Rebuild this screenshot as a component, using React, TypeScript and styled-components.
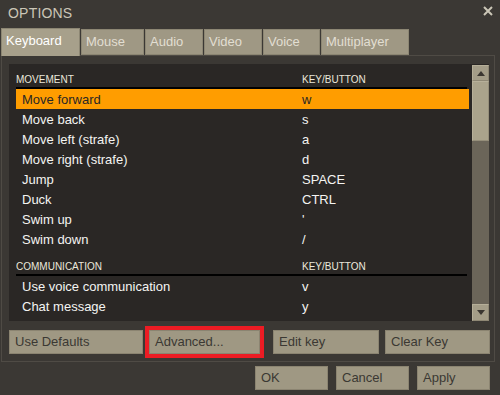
import React from "react";
import styled, { createGlobalStyle } from "styled-components";

const Global = createGlobalStyle`
  html, body {
    margin: 0;
    padding: 0;
    width: 500px;
    height: 395px;
    overflow: hidden;
    background: #3b3834;
  }
  * { box-sizing: border-box; }
`;

const FONT = `"Liberation Sans", Arial, sans-serif`;

const Window = styled.div`
  width: 500px;
  height: 395px;
  background: #3b3834;
  display: flex;
  flex-direction: column;
  font-family: ${FONT};
`;

const TitleBar = styled.div`
  height: 28px;
  display: flex;
  justify-content: space-between;
  align-items: flex-start;
  padding: 5px 7px 0 8px;
`;

const Title = styled.div`
  font-size: 14px;
  line-height: 16px;
  color: #cbc6b7;
  letter-spacing: 0.2px;
`;

const Close = styled.svg`
  margin-top: 1px;
  width: 10px;
  height: 10px;
`;

const TabRow = styled.div`
  height: 28px;
  display: flex;
  align-items: flex-end;
  gap: 1px;
  padding-left: 1px;
  margin-bottom: -1px;
  position: relative;
  z-index: 1;
`;

const Tab = styled.div<{ $w: number; $active?: boolean }>`
  width: ${(p) => p.$w}px;
  height: ${(p) => (p.$active ? 28 : 26)}px;
  background: ${(p) => (p.$active ? "#a7a08b" : "#9f9884")};
  border: 1px solid #8c8673;
  border-bottom: ${(p) => (p.$active ? "none" : "1px solid #8c8673")};
  margin-bottom: ${(p) => (p.$active ? 0 : 1)}px;
  color: ${(p) => (p.$active ? "#ffffff" : "#e2ded2")};
  font-size: 13px;
  line-height: 24px;
  padding-left: 4px;
  white-space: nowrap;
`;

const Panel = styled.div`
  margin-left: 1px;
  width: 494px;
  height: 307px;
  border: 1px solid #4f4b45;
  padding: 8px 0 7px 7px;
  display: flex;
  flex-direction: column;
`;

const ListBox = styled.div`
  width: 480px;
  height: 257px;
  display: flex;
`;

const ListBody = styled.div`
  flex: 1;
  background: #2a2725;
  padding: 0 3px 0 7px;
  overflow: hidden;
`;

const SectionHeader = styled.div<{ $h: number }>`
  height: ${(p) => p.$h}px;
  display: grid;
  grid-template-columns: 286px 1fr;
  align-items: end;
  padding-bottom: 2px;
  border-bottom: 2px solid #000;
  font-size: 10px;
  line-height: 10px;
  color: #ece8dc;
  margin-right: 2px;
`;

const Row = styled.div<{ $sel?: boolean }>`
  height: 20px;
  display: grid;
  grid-template-columns: 280px 1fr;
  padding-left: 6px;
  font-size: 13px;
  line-height: 21px;
  background: ${(p) => (p.$sel ? "#ff9d00" : "transparent")};
  color: ${(p) => (p.$sel ? "#2a2725" : "#f4f4f2")};
  white-space: nowrap;
`;

const ScrollBar = styled.div`
  width: 17px;
  display: flex;
  flex-direction: column;
  padding-top: 1px;
  background: #2a2725;
`;

const ScrollBtn = styled.div<{ $h: number }>`
  height: ${(p) => p.$h}px;
  background: #a49d88;
  border: 1px solid #b6af99;
  border-right-color: #8e8774;
  border-bottom-color: #8e8774;
  display: flex;
  align-items: center;
  justify-content: center;
`;

const Thumb = styled.div`
  height: 60px;
  background: #aaa38c;
  border: 1px solid #b7b09a;
  border-right-color: #958e7a;
  border-bottom-color: #958e7a;
`;

const Track = styled.div`
  flex: 1;
  background: #6b6559;
`;

const ButtonRow = styled.div`
  margin-top: 9px;
  display: flex;
  gap: 6px;
`;

const Button = styled.div<{ $w: number; $ml?: number; $mark?: boolean }>`
  width: ${(p) => p.$w}px;
  height: 24px;
  margin-left: ${(p) => p.$ml ?? 0}px;
  background: #9f9883;
  border: 1px solid #8b8471;
  color: #3b3833;
  font-size: 13px;
  line-height: 22px;
  padding-left: 5px;
  white-space: nowrap;
  outline: ${(p) => (p.$mark ? "4px solid #ec1c24" : "none")};
  outline-offset: 0px;
`;

const BottomRow = styled.div`
  margin-top: 4px;
  display: flex;
  justify-content: flex-end;
  gap: 8px;
  padding-right: 10px;
`;

const Arrow = ({ up }: { up?: boolean }) => (
  <svg width="8" height="5" viewBox="0 0 8 5">
    <polygon points={up ? "4,0 8,5 0,5" : "0,0 8,0 4,5"} fill="#3a3630" />
  </svg>
);

const movement: [string, string][] = [
  ["Move forward", "w"],
  ["Move back", "s"],
  ["Move left (strafe)", "a"],
  ["Move right (strafe)", "d"],
  ["Jump", "SPACE"],
  ["Duck", "CTRL"],
  ["Swim up", "'"],
  ["Swim down", "/"],
];

const comm: [string, string][] = [
  ["Use voice communication", "v"],
  ["Chat message", "y"],
];

const tabs: [string, number][] = [
  ["Keyboard", 79],
  ["Mouse", 63],
  ["Audio", 58],
  ["Video", 58],
  ["Voice", 57],
  ["Multiplayer", 88],
];

export default function App() {
  return (
    <Window>
      <Global />
      <TitleBar>
        <Title>OPTIONS</Title>
        <Close viewBox="0 0 10 10">
          <path d="M1 1 L9 9 M9 1 L1 9" stroke="#cbc6b7" strokeWidth="2" />
        </Close>
      </TitleBar>
      <TabRow>
        {tabs.map(([t, w], i) => (
          <Tab key={t} $w={w} $active={i === 0}>
            {t}
          </Tab>
        ))}
      </TabRow>
      <Panel>
        <ListBox>
          <ListBody>
            <SectionHeader $h={25}>
              <span>MOVEMENT</span>
              <span>KEY/BUTTON</span>
            </SectionHeader>
            {movement.map(([a, k], i) => (
              <Row key={a} $sel={i === 0}>
                <span>{a}</span>
                <span>{k}</span>
              </Row>
            ))}
            <SectionHeader $h={27}>
              <span>COMMUNICATION</span>
              <span>KEY/BUTTON</span>
            </SectionHeader>
            {comm.map(([a, k]) => (
              <Row key={a}>
                <span>{a}</span>
                <span>{k}</span>
              </Row>
            ))}
          </ListBody>
          <ScrollBar>
            <ScrollBtn $h={16}>
              <Arrow up />
            </ScrollBtn>
            <Thumb />
            <Track />
            <ScrollBtn $h={17}>
              <Arrow />
            </ScrollBtn>
          </ScrollBar>
        </ListBox>
        <ButtonRow>
          <Button $w={134}>Use Defaults</Button>
          <Button $w={111} $mark>
            Advanced...
          </Button>
          <Button $w={106} $ml={7}>
            Edit key
          </Button>
          <Button $w={105}>Clear Key</Button>
        </ButtonRow>
      </Panel>
      <BottomRow>
        <Button $w={73}>OK</Button>
        <Button $w={73}>Cancel</Button>
        <Button $w={73}>Apply</Button>
      </BottomRow>
    </Window>
  );
}
